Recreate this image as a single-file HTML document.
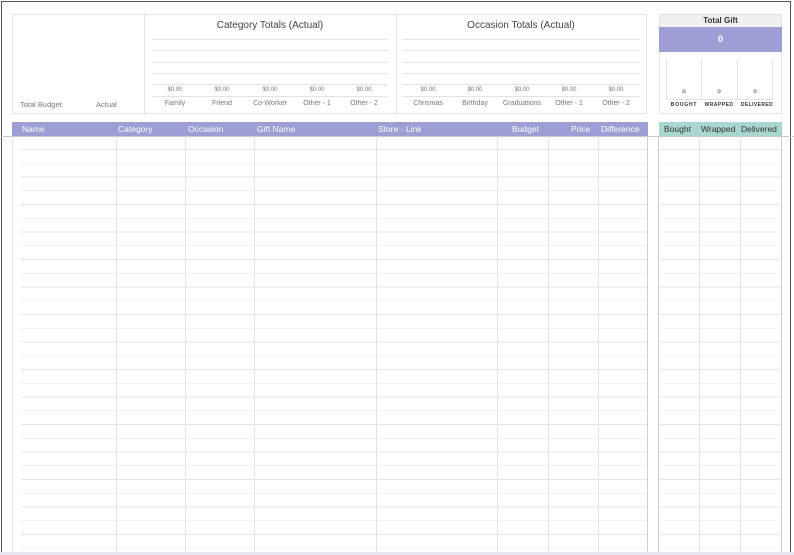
<!DOCTYPE html>
<html><head><style>
*{margin:0;padding:0;box-sizing:border-box}
body{width:794px;height:555px;background:#fff;position:relative;overflow:hidden;font-family:"Liberation Sans",sans-serif;color:#555}
.a{position:absolute}
.hl{position:absolute;height:1px;background:#e3e3e3}
.vl{position:absolute;width:1px;background:#e3e3e3}
.t{position:absolute;font-size:7px;color:#777;text-align:center;white-space:nowrap}
.h{position:absolute;font-size:8.5px;color:#fff;white-space:nowrap;top:124px}
</style></head><body>
<div class="a" style="left:1px;top:1px;width:790px;height:551px;border:1px solid #555;border-bottom:none"></div>
<div class="a" style="left:0;top:552px;width:794px;height:3px;background:#e8e6ee"></div>
<div class="a" style="left:12px;top:14px;width:635px;height:100px;border:1px solid #e3e3e3"></div>
<div class="vl" style="left:144px;top:14px;height:100px"></div>
<div class="vl" style="left:396px;top:14px;height:100px"></div>
<div class="t" style="left:20px;top:100px;font-size:7.5px">Total Budget</div>
<div class="t" style="left:96px;top:100px;font-size:7.5px">Actual</div>
<div class="a" style="left:144px;top:20px;width:252px;text-align:center;font-size:10px;color:#444">Category Totals (Actual)</div>
<div class="a" style="left:396px;top:20px;width:250px;text-align:center;font-size:10px;color:#444">Occasion Totals (Actual)</div>
<div class="hl" style="left:152px;width:236px;top:39px"></div>
<div class="hl" style="left:152px;width:236px;top:50px"></div>
<div class="hl" style="left:152px;width:236px;top:62px"></div>
<div class="hl" style="left:152px;width:236px;top:73px"></div>
<div class="hl" style="left:152px;width:236px;top:84px"></div>
<div class="hl" style="left:152px;width:236px;top:96px"></div>
<div class="hl" style="left:403px;width:237px;top:39px"></div>
<div class="hl" style="left:403px;width:237px;top:50px"></div>
<div class="hl" style="left:403px;width:237px;top:62px"></div>
<div class="hl" style="left:403px;width:237px;top:73px"></div>
<div class="hl" style="left:403px;width:237px;top:84px"></div>
<div class="hl" style="left:403px;width:237px;top:96px"></div>
<div class="t" style="left:155px;width:40px;top:87px;font-size:6px">$0.00</div>
<div class="t" style="left:202px;width:40px;top:87px;font-size:6px">$0.00</div>
<div class="t" style="left:250px;width:40px;top:87px;font-size:6px">$0.00</div>
<div class="t" style="left:297px;width:40px;top:87px;font-size:6px">$0.00</div>
<div class="t" style="left:344px;width:40px;top:87px;font-size:6px">$0.00</div>
<div class="t" style="left:155px;width:40px;top:100px">Family</div>
<div class="t" style="left:202px;width:40px;top:100px">Friend</div>
<div class="t" style="left:250px;width:40px;top:100px">Co-Worker</div>
<div class="t" style="left:297px;width:40px;top:100px">Other - 1</div>
<div class="t" style="left:344px;width:40px;top:100px">Other - 2</div>
<div class="t" style="left:408px;width:40px;top:87px;font-size:6px">$0.00</div>
<div class="t" style="left:455px;width:40px;top:87px;font-size:6px">$0.00</div>
<div class="t" style="left:502px;width:40px;top:87px;font-size:6px">$0.00</div>
<div class="t" style="left:549px;width:40px;top:87px;font-size:6px">$0.00</div>
<div class="t" style="left:596px;width:40px;top:87px;font-size:6px">$0.00</div>
<div class="t" style="left:408px;width:40px;top:100px">Chrismas</div>
<div class="t" style="left:455px;width:40px;top:100px">Birthday</div>
<div class="t" style="left:502px;width:40px;top:100px">Graduations</div>
<div class="t" style="left:549px;width:40px;top:100px">Other - 1</div>
<div class="t" style="left:596px;width:40px;top:100px">Other - 2</div>
<div class="a" style="left:659px;top:14px;width:123px;height:100px;border:1px solid #e3e3e3"></div>
<div class="a" style="left:660px;top:15px;width:121px;height:12px;background:#f0f0f0;text-align:center;font-size:8px;font-weight:bold;color:#333;line-height:12px">Total Gift</div>
<div class="a" style="left:659px;top:27px;width:123px;height:25px;background:#9c9ed4;color:#fff;text-align:center;font-size:9px;font-weight:bold;line-height:25px">0</div>
<div class="vl" style="left:666px;top:60px;height:39px"></div>
<div class="vl" style="left:701px;top:60px;height:39px"></div>
<div class="vl" style="left:737px;top:60px;height:39px"></div>
<div class="vl" style="left:772px;top:60px;height:39px"></div>
<div class="hl" style="left:666px;width:107px;top:99px"></div>
<div class="t" style="left:666px;width:36px;top:89px;font-size:6px;color:#333">o</div>
<div class="t" style="left:701px;width:36px;top:89px;font-size:6px;color:#333">o</div>
<div class="t" style="left:737px;width:36px;top:89px;font-size:6px;color:#333">o</div>
<div class="t" style="left:664px;width:40px;top:102px;font-size:5px;font-weight:bold;color:#333;letter-spacing:.8px">BOUGHT</div>
<div class="t" style="left:701px;width:36px;top:102px;font-size:5px;font-weight:bold;color:#333;letter-spacing:.5px">WRAPPED</div>
<div class="t" style="left:737px;width:40px;top:102px;font-size:5px;font-weight:bold;color:#333;letter-spacing:.4px">DELIVERED</div>
<div class="a" style="left:12px;top:122px;width:636px;height:14px;background:#9c9ed4"></div>
<div class="a" style="left:659px;top:122px;width:123px;height:14px;background:#a9d6cf"></div>
<div class="a" style="left:0;top:136px;width:794px;height:1px;background:#c8c8c8"></div>
<div class="h" style="left:22px">Name</div>
<div class="h" style="left:118px">Category</div>
<div class="h" style="left:188px">Occasion</div>
<div class="h" style="left:257px">Gift Name</div>
<div class="h" style="left:378px">Store - Link</div>
<div class="h" style="left:512px">Budget</div>
<div class="h" style="left:571px">Price</div>
<div class="h" style="left:601px">Difference</div>
<div class="h" style="left:664px;color:#333">Bought</div>
<div class="h" style="left:701px;color:#333">Wrapped</div>
<div class="h" style="left:741px;color:#333">Delivered</div>
<div class="vl" style="left:12px;top:136px;height:416px"></div>
<div class="vl" style="left:116px;top:136px;height:416px"></div>
<div class="vl" style="left:185px;top:136px;height:416px"></div>
<div class="vl" style="left:254px;top:136px;height:416px"></div>
<div class="vl" style="left:376px;top:136px;height:416px"></div>
<div class="vl" style="left:497px;top:136px;height:416px"></div>
<div class="vl" style="left:548px;top:136px;height:416px"></div>
<div class="vl" style="left:598px;top:136px;height:416px"></div>
<div class="vl" style="left:647px;top:136px;height:416px;background:#d0d0d0"></div>
<div class="vl" style="left:658px;top:136px;height:416px;background:#d0d0d0"></div>
<div class="vl" style="left:699px;top:136px;height:416px"></div>
<div class="vl" style="left:740px;top:136px;height:416px"></div>
<div class="vl" style="left:781px;top:136px;height:416px;background:#d0d0d0"></div>
<div class="a" style="left:21px;top:136px;width:626px;height:416px;background:repeating-linear-gradient(to bottom,transparent 0,transparent 13px,#e6e6e6 13px,#e6e6e6 13.75px)"></div>
<div class="a" style="left:659px;top:136px;width:122px;height:416px;background:repeating-linear-gradient(to bottom,transparent 0,transparent 13px,#e6e6e6 13px,#e6e6e6 13.75px)"></div>
</body></html>
